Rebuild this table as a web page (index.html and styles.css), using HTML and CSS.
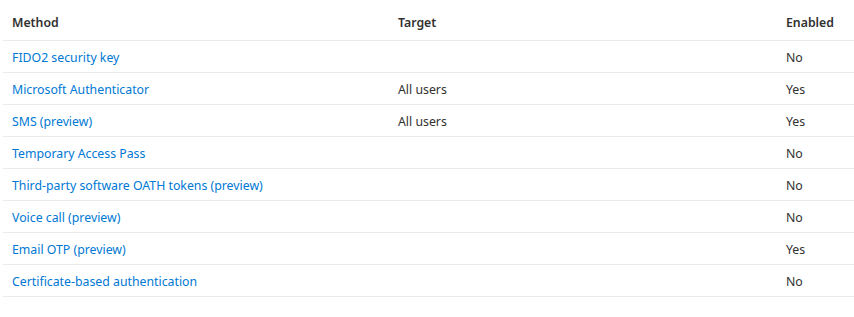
FILE: index.html
```html
<!DOCTYPE html>
<html>
<head>
<meta charset="utf-8">
<link rel="stylesheet" href="styles.css">
</head>
<body>
<div class="table">
  <div class="row head">
    <div class="cell">Method</div>
    <div class="cell">Target</div>
    <div class="cell">Enabled</div>
  </div>
  <div class="row">
    <div class="cell"><a class="link">FIDO2 security key</a></div>
    <div class="cell"></div>
    <div class="cell">No</div>
  </div>
  <div class="row">
    <div class="cell"><a class="link">Microsoft Authenticator</a></div>
    <div class="cell">All users</div>
    <div class="cell">Yes</div>
  </div>
  <div class="row">
    <div class="cell"><a class="link">SMS (preview)</a></div>
    <div class="cell">All users</div>
    <div class="cell">Yes</div>
  </div>
  <div class="row">
    <div class="cell"><a class="link">Temporary Access Pass</a></div>
    <div class="cell"></div>
    <div class="cell">No</div>
  </div>
  <div class="row">
    <div class="cell"><a class="link">Third-party software OATH tokens (preview)</a></div>
    <div class="cell"></div>
    <div class="cell">No</div>
  </div>
  <div class="row">
    <div class="cell"><a class="link">Voice call (preview)</a></div>
    <div class="cell"></div>
    <div class="cell">No</div>
  </div>
  <div class="row">
    <div class="cell"><a class="link">Email OTP (preview)</a></div>
    <div class="cell"></div>
    <div class="cell">Yes</div>
  </div>
  <div class="row">
    <div class="cell"><a class="link">Certificate-based authentication</a></div>
    <div class="cell"></div>
    <div class="cell">No</div>
  </div>
</div>
</body>
</html>
```
FILE: styles.css
```css
html, body {
  margin: 0;
  padding: 0;
  background: #ffffff;
}
body {
  font-family: "Noto Sans", "Open Sans", sans-serif;
  font-size: 12.3px;
  color: #323130;
}
.table {
  margin-left: 3px;
}
.row {
  display: grid;
  grid-template-columns: 386px 388px 1fr;
  height: 29px;
  padding-top: 2px;
  align-items: center;
  border-bottom: 1px solid #edebe9;
}
.row.head {
  height: 35px;
  padding-top: 5px;
  font-weight: 600;
}
.cell {
  padding-left: 9px;
  white-space: nowrap;
}
.link {
  color: #0078d4;
  text-decoration: none;
  cursor: pointer;
}
```
